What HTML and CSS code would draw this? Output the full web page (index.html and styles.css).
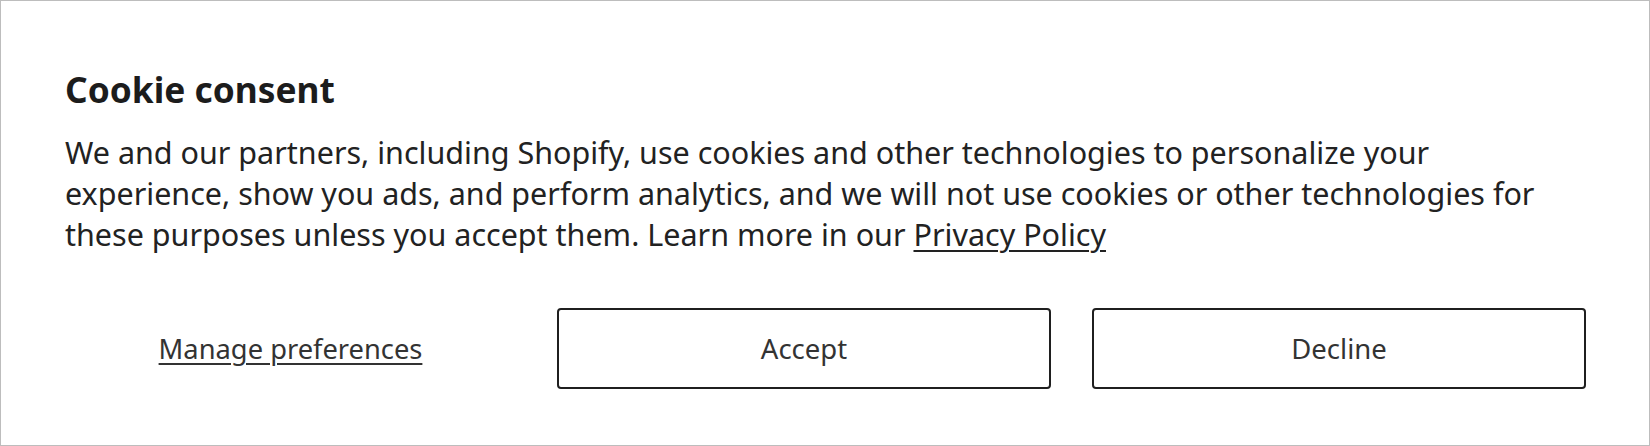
FILE: index.html
```html
<!DOCTYPE html>
<html lang="en">
<head>
<meta charset="utf-8">
<title>Cookie consent</title>
<link rel="stylesheet" href="styles.css">
</head>
<body>
<section class="banner">
  <h2 class="title">Cookie consent</h2>
  <p class="text">We and our partners, including Shopify, use cookies and other technologies to personalize your experience, show you ads, and perform analytics, and we will not use cookies or other technologies for these purposes unless you accept them. Learn more in our <a class="link" href="#">Privacy Policy</a></p>
  <div class="actions">
    <div class="manage-cell"><a class="manage" href="#">Manage preferences</a></div>
    <button class="btn" type="button">Accept</button>
    <button class="btn" type="button">Decline</button>
  </div>
</section>
</body>
</html>
```
FILE: styles.css
```css
html, body {
  margin: 0;
  padding: 0;
  background: #fff;
}
body {
  font-family: "Noto Sans", "Open Sans", sans-serif;
  color: #222;
}
.banner {
  box-sizing: border-box;
  width: 1650px;
  height: 446px;
  border: 1px solid #bdbdbd;
  padding: 67px 63px 0 64px;
  background: #fff;
}
.title {
  margin: 0;
  font-size: 35.3px;
  line-height: 42px;
  font-weight: 700;
  color: #1c1c1c;
}
.text {
  margin: 22px 0 0;
  font-size: 30.5px;
  line-height: 41px;
  color: #222;
}
.link {
  color: #222;
  text-decoration: underline;
  text-decoration-thickness: 2px;
  text-underline-offset: 4px;
}
.actions {
  margin-top: 53px;
  display: grid;
  grid-template-columns: 1fr 494px 494px;
  column-gap: 41px;
  align-items: center;
}
.manage-cell {
  display: flex;
  justify-content: center;
}
.manage {
  font-size: 27.3px;
  color: #333;
  text-decoration: underline;
  text-decoration-thickness: 2px;
  text-underline-offset: 4px;
}
.btn {
  box-sizing: border-box;
  height: 81px;
  border: 2px solid #1f1f1f;
  border-radius: 4px;
  background: #fff;
  font-family: "Noto Sans", "Open Sans", sans-serif;
  font-size: 27.5px;
  color: #333;
  padding: 0;
  display: flex;
  align-items: center;
  justify-content: center;
}
```
